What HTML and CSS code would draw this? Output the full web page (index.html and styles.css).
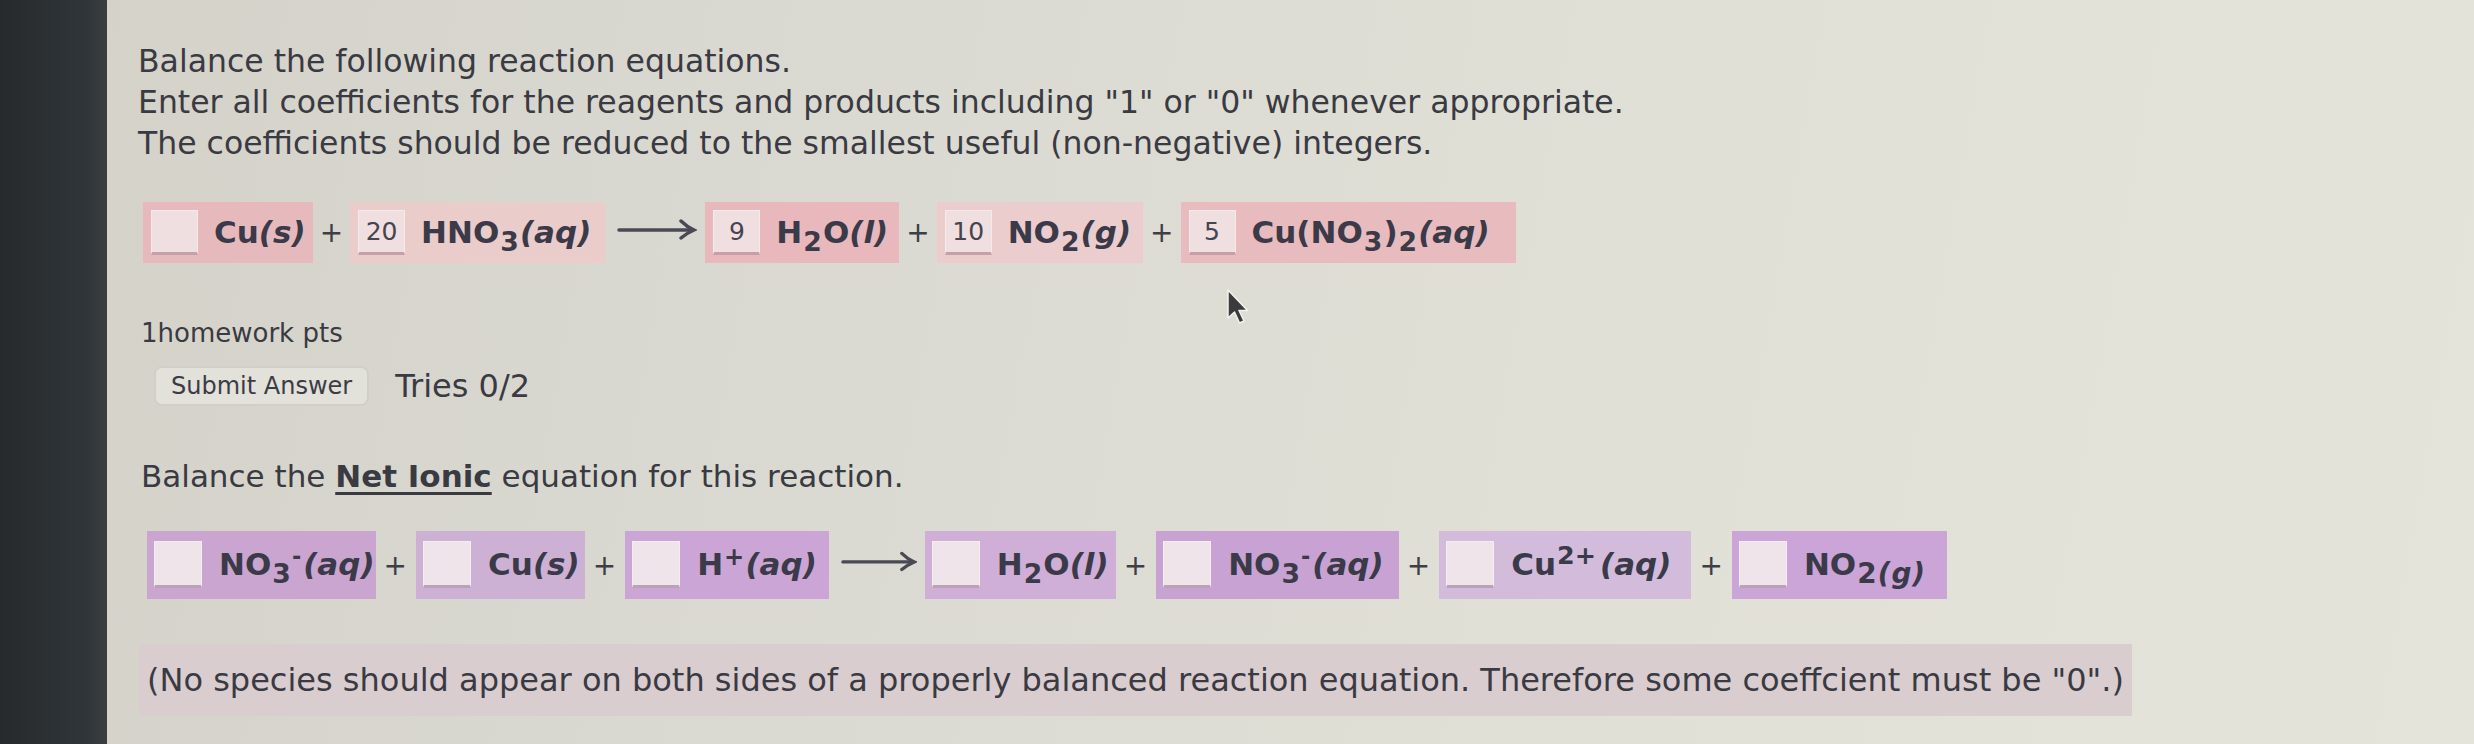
FILE: index.html
```html
<!DOCTYPE html>
<html lang="en">
<head>
<meta charset="utf-8">
<title>Balance reaction equations</title>
<link rel="stylesheet" href="styles.css">
</head>
<body>
<div class="page">
  <aside class="bezel"></aside>
  <main class="content">
    <div class="intro">
      <p>Balance the following reaction equations.</p>
      <p>Enter all coefficients for the reagents and products including "1" or "0" whenever appropriate.</p>
      <p>The coefficients should be reduced to the smallest useful (non-negative) integers.</p>
    </div>

    <div class="eq eq-mol">
      <span class="term p1"><span class="coef"></span><span class="sp">Cu<i>(s)</i></span></span>
      <span class="plus">+</span>
      <span class="term p2"><span class="coef">20</span><span class="sp">HNO<sub>3</sub><i>(aq)</i></span></span>
      <svg class="arrow" viewBox="0 0 80 24" width="80" height="24" aria-hidden="true"><path d="M2 13 H76" /><path d="M64 4 Q70 10 77 13 Q70 16 64 21" /></svg>
      <span class="term p3"><span class="coef">9</span><span class="sp">H<sub>2</sub>O<i>(l)</i></span></span>
      <span class="plus">+</span>
      <span class="term p4"><span class="coef">10</span><span class="sp">NO<sub>2</sub><i>(g)</i></span></span>
      <span class="plus">+</span>
      <span class="term p5"><span class="coef">5</span><span class="sp">Cu(NO<sub>3</sub>)<sub>2</sub><i>(aq)</i></span></span>
    </div>

    <div class="pts">1homework pts</div>
    <div class="submit-row">
      <button class="submit" type="button">Submit Answer</button>
      <span class="tries">Tries 0/2</span>
    </div>

    <p class="net">Balance the <b class="ul">Net Ionic</b> equation for this reaction.</p>

    <div class="eq eq-ion">
      <span class="term v1"><span class="coef"></span><span class="sp">NO<sub>3</sub><sup class="minus">-</sup><i>(aq)</i></span></span>
      <span class="plus">+</span>
      <span class="term v2"><span class="coef"></span><span class="sp">Cu<i>(s)</i></span></span>
      <span class="plus">+</span>
      <span class="term v3"><span class="coef"></span><span class="sp">H<sup>+</sup><i>(aq)</i></span></span>
      <svg class="arrow" viewBox="0 0 80 24" width="76" height="24" aria-hidden="true"><path d="M2 13 H76" /><path d="M64 4 Q70 10 77 13 Q70 16 64 21" /></svg>
      <span class="term v4"><span class="coef"></span><span class="sp">H<sub>2</sub>O<i>(l)</i></span></span>
      <span class="plus">+</span>
      <span class="term v5"><span class="coef"></span><span class="sp">NO<sub>3</sub><sup class="minus">-</sup><i>(aq)</i></span></span>
      <span class="plus">+</span>
      <span class="term v6"><span class="coef"></span><span class="sp">Cu<sup class="charge">2+</sup><i>(aq)</i></span></span>
      <span class="plus">+</span>
      <span class="term v7"><span class="coef"></span><span class="sp">NO<sub class="state">2<i>(g)</i></sub></span></span>
    </div>

    <div class="note">(No species should appear on both sides of a properly balanced reaction equation. Therefore some coeffcient must be "0".)</div>
  </main>
  <svg class="cursor" viewBox="0 0 24 38" width="24" height="38" aria-hidden="true"><path d="M2 1 L2 29 L8.5 23 L13.5 34 L18 32 L13 21.5 L21.5 21.5 Z" /></svg>
</div>
</body>
</html>
```
FILE: styles.css
```css
* { box-sizing: border-box; }
html, body { margin: 0; padding: 0; }
body {
  width: 2474px;
  height: 744px;
  overflow: hidden;
  font-family: "DejaVu Sans", Verdana, sans-serif;
  color: #3a3a42;
}
.page {
  position: relative;
  display: flex;
  width: 2474px;
  height: 744px;
  background: linear-gradient(100deg, #d3d1c8 0%, #dad9d1 30%, #e0e0d7 65%, #e4e4db 100%);
}
.bezel {
  width: 107px;
  flex: 0 0 107px;
  background: linear-gradient(90deg, #262a2c 0%, #30353a 80%, #3a3e41 100%);
}
.content {
  flex: 1;
  padding-left: 31px;
}
.intro { margin-top: 41px; }
.intro p {
  margin: 0;
  font-size: 31.5px;
  line-height: 41px;
  white-space: nowrap;
}

/* equations */
.eq {
  display: flex;
  align-items: center;
  margin-left: 5px;
  white-space: nowrap;
}
.eq-mol { margin-top: 38px; }
.eq-ion { margin-top: 37px; margin-left: 9px; }
.term {
  display: flex;
  align-items: center;
  gap: 16px;
  padding: 8px 7px 8px 8px;
}
.eq-ion .term { padding: 10px 7px 11px 7px; gap: 17px; }
.coef {
  width: 47px;
  height: 45px;
  display: flex;
  align-items: center;
  justify-content: center;
  font-size: 25px;
  font-weight: normal;
  color: #45454d;
  background: #efdfe0;
  border: 1px solid rgba(255,255,255,0.35);
  border-bottom: 3px solid #c5a0a6;
}
.eq-ion .coef {
  width: 48px;
  height: 47px;
  background: #efe4e9;
  border-bottom-color: #baa3b7;
}
.sp {
  font-size: 31px;
  font-weight: bold;
  color: #3a3a48;
  line-height: 1;
}
.sp i { font-style: oblique; }
.sp sub { font-size: 0.86em; vertical-align: -0.3em; line-height: 0; margin: 0 1px; }
.sp sup { font-size: 0.78em; vertical-align: 0.42em; line-height: 0; margin: 0 1px; }
.sp sup.minus { margin: 0 2px 0 0; font-size: 0.72em; vertical-align: 0.5em; }
.sp sup.charge { font-size: 0.82em; margin: 0 4px 0 1px; }
.sp sub.state { font-size: 0.9em; letter-spacing: 1px; }
.sp sub i { font-style: oblique; }
.plus {
  font-size: 28px;
  color: #3e3e46;
  padding: 0 7px;
}
.eq-ion .plus { padding: 0 9px 0 8px; }
.arrow {
  margin: 0 8px 0 12px;
  position: relative;
  top: -4px;
}
.arrow path { fill: none; stroke: #4a4a55; stroke-width: 3.5; stroke-linecap: round; }

.p1 { background: #e6babd; }
.p2 { background: #eaccca; padding-right: 14px; }
.p3 { background: #e8b8bc; padding-right: 11px; }
.p4 { background: #ebcdce; padding-right: 12px; }
.p5 { background: #e8bbbf; padding-right: 26px; }
.eq-ion .v1 { background: #c9a5d0; padding-right: 1px; }
.eq-ion .v2 { background: #cdb1d4; padding-right: 5px; }
.eq-ion .v3 { background: #cba5d6; padding-right: 12px; }
.eq-ion .v4 { background: #cfaed8; }
.eq-ion .v5 { background: #c8a2d3; padding-right: 15px; }
.eq-ion .v6 { background: #d3bcdb; padding-right: 20px; }
.eq-ion .v7 { background: #cba4d8; padding-right: 20px; }

/* points and submit */
.pts {
  margin-top: 52px;
  margin-left: 3px;
  font-size: 26px;
  line-height: 36px;
}
.submit-row {
  margin-top: 15px;
  margin-left: 16px;
  display: flex;
  align-items: center;
  gap: 26px;
}
.submit {
  height: 40px;
  padding: 0 15px;
  font-family: "DejaVu Sans", Verdana, sans-serif;
  font-size: 24px;
  color: #3c3c44;
  background: #e2e1da;
  border: 2px solid #d1d0c8;
  border-radius: 8px;
}
.tries { font-size: 32px; color: #3a3a42; }

.net {
  margin: 52px 0 0 3px;
  font-size: 31px;
  line-height: 36px;
  white-space: nowrap;
}
.ul {
  text-decoration: underline;
  text-decoration-thickness: 3px;
  text-underline-offset: 5px;
}

.note {
  display: inline-block;
  margin-top: 45px;
  margin-left: 1px;
  padding: 17px 8px;
  font-size: 32px;
  line-height: 38px;
  white-space: nowrap;
  background: #d9cdd0;
}

.cursor {
  position: absolute;
  left: 1226px;
  top: 289px;
}
.cursor path { fill: #3b3b3e; stroke: #f2f2ee; stroke-width: 1.5; stroke-linejoin: round; }
```
